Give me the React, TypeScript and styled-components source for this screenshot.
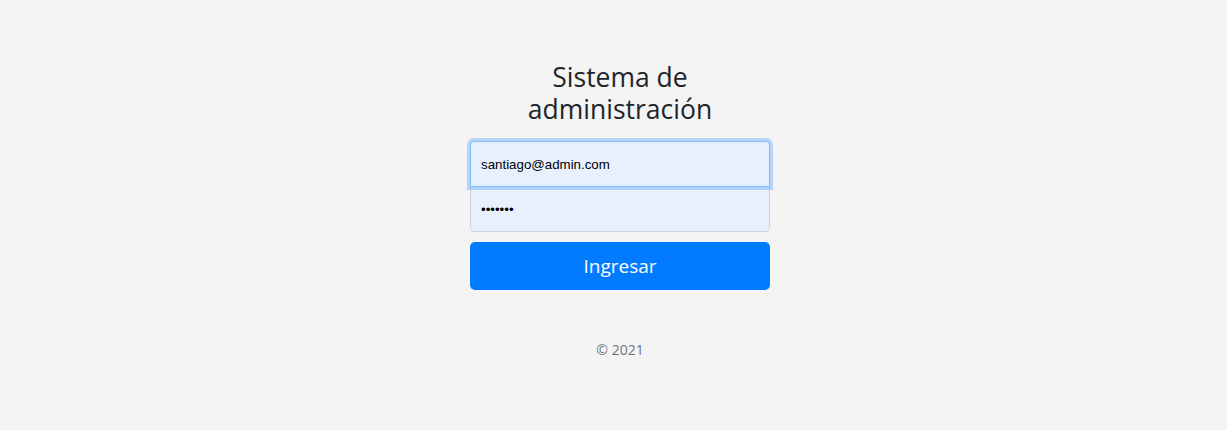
import React from "react";
import styled, { createGlobalStyle } from "styled-components";

const GlobalStyle = createGlobalStyle`
  html, body, #root {
    height: 100%;
  }
  body {
    margin: 0;
    background: #f4f4f4;
    font-family: "Open Sans", "Noto Sans", sans-serif;
    color: #212529;
  }
  * {
    box-sizing: border-box;
  }
`;

const Page = styled.div`
  height: 100%;
  display: flex;
  align-items: center;
  justify-content: center;
  padding: 49px 0 40px 13px;
`;

const Form = styled.form`
  width: 300px;
  padding: 15px;
  margin: 0 auto;
  text-align: center;
  box-sizing: content-box;
`;

const Title = styled.h1`
  margin: 0 0 16px;
  font-size: 26.5px;
  font-weight: 400;
  line-height: 32px;
  color: #212529;
`;

const Field = styled.input<{ $first?: boolean }>`
  position: relative;
  display: block;
  width: 100%;
  height: 46px;
  padding: 10px;
  font-family: "Liberation Sans", Arial, sans-serif;
  font-size: 13.3px;
  color: #000;
  background: #e8f0fe;
  border: 1px solid ${(p) => (p.$first ? "#80bdff" : "#ced4da")};
  border-radius: ${(p) => (p.$first ? "4px 4px 0 0" : "0 0 4px 4px")};
  margin-bottom: ${(p) => (p.$first ? "-1px" : "10px")};
  box-shadow: ${(p) => (p.$first ? "0 0 0 3px rgba(0, 123, 255, 0.25)" : "none")};
  z-index: ${(p) => (p.$first ? 2 : 1)};
  outline: none;
`;

const Button = styled.button`
  display: block;
  width: 100%;
  height: 48px;
  border: none;
  border-radius: 5px;
  background: #007bff;
  color: #fff;
  font-family: "Open Sans", "Noto Sans", sans-serif;
  font-size: 19px;
  line-height: 1.5;
  cursor: pointer;
`;

const Footer = styled.p`
  margin: 48px 0 16px;
  font-size: 14px;
  line-height: 24px;
  color: #6c757d;
`;

export default function App() {
  return (
    <>
      <GlobalStyle />
      <Page>
        <Form onSubmit={(e) => e.preventDefault()}>
          <Title>
            Sistema de
            <br />
            administración
          </Title>
          <Field $first type="email" defaultValue="santiago@admin.com" autoFocus />
          <Field type="password" defaultValue="1234567" />
          <Button type="submit">Ingresar</Button>
          <Footer>© 2021</Footer>
        </Form>
      </Page>
    </>
  );
}
